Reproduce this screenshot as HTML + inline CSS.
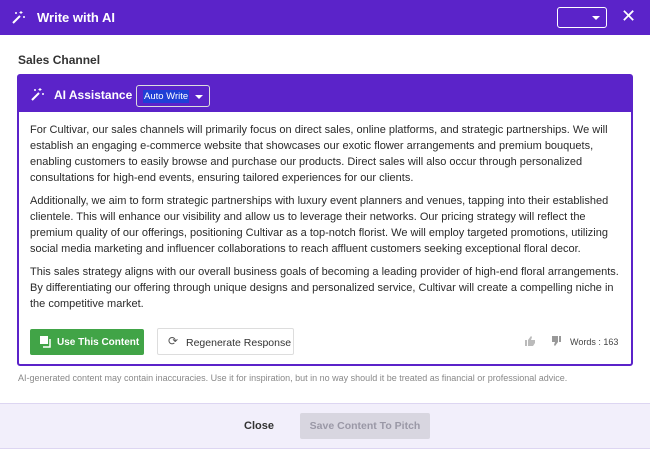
<!DOCTYPE html>
<html><head><style>
*{margin:0;padding:0;box-sizing:border-box}
body{width:650px;height:450px;background:#fff;font-family:"Liberation Sans",sans-serif;position:relative;overflow:hidden;color:#333}
.top{position:absolute;left:0;top:0;width:650px;height:35px;background:#5b23c9}
.top .t{position:absolute;left:37px;top:10px;color:#fff;font-size:13px;font-weight:bold}
.sel{position:absolute;left:557px;top:7px;width:50px;height:21px;border:1px solid #fff;border-radius:3px}
.sel:after{content:"";position:absolute;right:6px;top:8px;border:4px solid transparent;border-top:4px solid #fff}
.x{position:absolute;left:621px;top:6px;color:#fff;font-size:18px}
.lbl{position:absolute;left:18px;top:53px;font-size:12px;font-weight:bold;color:#333}
.panel{position:absolute;left:17px;top:74px;width:616px;height:292px;border:2px solid #5b23c9;border-radius:3px}
.ph{position:absolute;left:0;top:0;width:612px;height:36px;background:#5b23c9}
.ph .t{position:absolute;left:35px;top:12px;color:#fff;font-size:12px;font-weight:bold}
.aw{position:absolute;left:117px;top:9px;width:74px;height:22px;border:1px solid #ddd;border-radius:3px}
.aw span{position:absolute;left:6px;top:4px;background:#1f3fd6;color:#fff;font-size:9.5px;padding:1px 1px}
.aw:after{content:"";position:absolute;right:6px;top:9px;border:4px solid transparent;border-top:4px solid #fff}
.txt{position:absolute;left:11px;top:46px;width:594px;font-size:11px;line-height:16px;color:#2a2a2a}
.txt p{margin-bottom:7px}
.btn1{position:absolute;left:11px;top:253px;width:114px;height:26px;background:#41a447;color:#fff;font-size:10px;font-weight:bold;border-radius:2px;padding:8px 0 0 27px;white-space:nowrap}
.btn2{position:absolute;left:138px;top:252px;width:137px;height:27px;border:1px solid #ddd;border-radius:2px;font-size:10.5px;padding:8px 0 0 28px;color:#333;white-space:nowrap}
.words{position:absolute;left:551px;top:261px;font-size:9px;color:#444}
.disc{position:absolute;left:18px;top:373px;font-size:9px;color:#888}
.foot{position:absolute;left:0;top:403px;width:650px;height:46px;background:#f2effb;border-top:1px solid #ddd6f2;border-bottom:1px solid #ddd6f2}
.close{position:absolute;left:244px;top:16px;font-size:11px;color:#333;font-weight:bold}
.save{position:absolute;left:300px;top:9px;width:130px;height:26px;background:#d8d6e0;color:#9a98a6;font-size:10.5px;font-weight:bold;text-align:center;padding-top:7px;border-radius:2px}
</style></head><body>
<div class="top">
<svg style="position:absolute;left:11px;top:10px" width="15" height="15" viewBox="0 0 15 15"><path d="M2 13L9 6" stroke="#fff" stroke-width="2"/><path d="M10 1v3M8.5 2.5h3M13 6v2M12 7h2M5 2v2M4 3h2" stroke="#fff" stroke-width="1"/></svg>
<div class="t">Write with AI</div><div class="sel"></div><div class="x">✕</div></div>
<div class="lbl">Sales Channel</div>
<div class="panel">
<div class="ph">
<svg style="position:absolute;left:11px;top:11px" width="15" height="15" viewBox="0 0 15 15"><path d="M2 13L9 6" stroke="#fff" stroke-width="2"/><path d="M10 1v3M8.5 2.5h3M13 6v2M12 7h2M5 2v2M4 3h2" stroke="#fff" stroke-width="1"/></svg>
<div class="t">AI Assistance</div><div class="aw"><span>Auto Write</span></div></div>
<div class="txt">
<p>For Cultivar, our sales channels will primarily focus on direct sales, online platforms, and strategic partnerships. We will establish an engaging e-commerce website that showcases our exotic flower arrangements and premium bouquets, enabling customers to easily browse and purchase our products. Direct sales will also occur through personalized consultations for high-end events, ensuring tailored experiences for our clients.</p>
<p>Additionally, we aim to form strategic partnerships with luxury event planners and venues, tapping into their established clientele. This will enhance our visibility and allow us to leverage their networks. Our pricing strategy will reflect the premium quality of our offerings, positioning Cultivar as a top-notch florist. We will employ targeted promotions, utilizing social media marketing and influencer collaborations to reach affluent customers seeking exceptional floral decor.</p>
<p>This sales strategy aligns with our overall business goals of becoming a leading provider of high-end floral arrangements. By differentiating our offering through unique designs and personalized service, Cultivar will create a compelling niche in the competitive market.</p>
</div>
<div class="btn1"><svg style="position:absolute;left:10px;top:7px" width="12" height="12"><rect x="0" y="0" width="8" height="8" fill="#fff"/><path d="M10 3v8H3" stroke="#fff" stroke-width="1.5" fill="none"/></svg>Use This Content</div>
<div class="btn2"><span style="position:absolute;left:10px;top:5px;font-size:12px;color:#555">⟳</span>Regenerate Response</div>
<svg style="position:absolute;left:505px;top:259px" width="42" height="12"><path d="M1 5h2v6H1zM4 5l3-4 1 1-1 3h4v3l-2 3H4z" fill="#bbb"/><path d="M28 1h6v6l-3 4-1-1 1-3h-3zM35 1h2v6h-2z" fill="#999"/></svg>
<div class="words">Words : 163</div>
</div>
<div class="disc">AI-generated content may contain inaccuracies. Use it for inspiration, but in no way should it be treated as financial or professional advice.</div>
<div class="foot"><div class="close">Close</div><div class="save">Save Content To Pitch</div></div>
</body></html>
